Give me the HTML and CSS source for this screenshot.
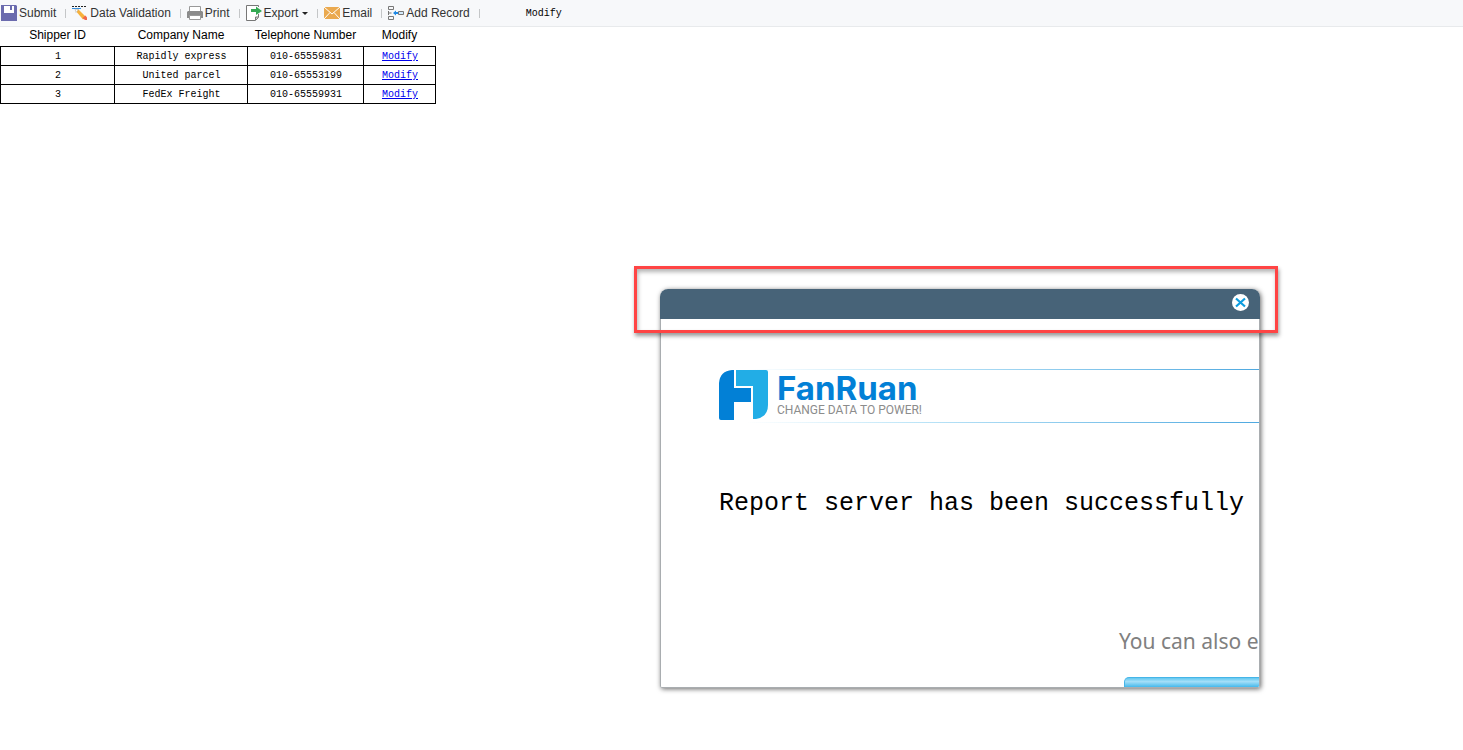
FILE: index.html
```html
<!DOCTYPE html>
<html lang="en">
<head>
    <meta charset="UTF-8">
    <meta name="viewport" content="width=device-width, initial-scale=1.0">
    <title>Shippers</title>
    <link rel="stylesheet" href="styles.css">
</head>
<body>
    <div class="toolbar">
        <button type="button" class="tool">
            <svg width="16" height="16" viewBox="0 0 16 16"><path d="M0 0h15l1 1v15H0z" fill="#6b6bae"/><path d="M3 1h10v7H3z" fill="#fff"/><path d="M9 1h2v4H9z" fill="#6b6bae"/><path d="M2 10h12v4H2z" fill="#6b6bae"/></svg>
            Submit
        </button>
        <button type="button" class="tool">
            <svg width="16" height="16" viewBox="0 0 16 16"><path d="M0 1.500h14" stroke="#222" stroke-dasharray="2 1"/><path d="M0 3.500h9" stroke="#2f8de0"/><path d="M3 5l3-1 8 8-3 2.500z" fill="#f6b13c"/><path d="M3 4l3.500.5-2.500 3z" fill="#fff" stroke="#aaa" stroke-width=".5"/><path d="M10.500 13l3-2.500 1.500 2v2.500h-2z" fill="#f0674c"/></svg>
            Data Validation
        </button>
        <button type="button" class="tool">
            <svg width="16" height="16" viewBox="0 0 16 16"><path d="M2.500 7V1.500h11V7" fill="#fff" stroke="#999"/><path d="M1 6h14l1 1v6H0V7z" fill="#8b8b8b"/><path d="M2.500 10.500h11v4h-11z" fill="#fff" stroke="#999"/></svg>
            Print
        </button>
        <button type="button" class="tool">
            <svg width="16" height="16" viewBox="0 0 16 16"><path d="M12.500 2V.5H.5v15h9l3-3V9" fill="#fff" stroke="#777"/><path d="M9.500 15v-3h3" fill="#ccc" stroke="#777"/><path d="M5 4h5V1.500L16 6l-6 4V7H5z" fill="#34a853"/></svg>
            Export
            <span class="caret"></span>
        </button>
        <button type="button" class="tool">
            <svg width="16" height="16" viewBox="0 0 16 16"><path d="M0 2h16v12H0z" fill="#eaa94f"/><path d="M0 2l8 7 8-7M0 14l6-6.500M16 14l-6-6.500" fill="none" stroke="#fff"/></svg>
            Email
        </button>
        <button type="button" class="tool">
            <svg width="16" height="16" viewBox="0 0 16 16"><path d="M.5 1.500h5v3h-5zM.5 11.500h5v3h-5zM.5 6v4M.5 8h3" fill="none" stroke="#777"/><path d="M10.500 6.500h5v3h-5z" fill="#d3e9fb" stroke="#777"/><path d="M5 8l3-2.500V7h2v2H8v1.500z" fill="#1e88e5"/></svg>
            Add Record
        </button>
        <span class="toolbar-text">Modify</span>
    </div>

    <table class="report">
        <thead>
            <tr>
                <th class="col-id">Shipper ID</th>
                <th class="col-company">Company Name</th>
                <th class="col-phone">Telephone Number</th>
                <th class="col-modify">Modify</th>
            </tr>
        </thead>
        <tbody>
            <tr>
                <td>1</td>
                <td>Rapidly express</td>
                <td>010-65559831</td>
                <td><a href="#">Modify</a></td>
            </tr>
            <tr>
                <td>2</td>
                <td>United parcel</td>
                <td>010-65553199</td>
                <td><a href="#">Modify</a></td>
            </tr>
            <tr>
                <td>3</td>
                <td>FedEx Freight</td>
                <td>010-65559931</td>
                <td><a href="#">Modify</a></td>
            </tr>
        </tbody>
    </table>

    <div class="dialog" role="dialog" aria-label="Modify">
        <div class="dialog-header">
            <button type="button" class="close" aria-label="Close">
                <svg width="17" height="17" viewBox="0 0 17 17"><circle cx="8.500" cy="8.500" r="8.500" fill="#fff"/><path d="M4 4.500l9 8M13 4.500l-9 8" stroke="#0d9de0" stroke-width="2.200"/></svg>
            </button>
        </div>
        <div class="dialog-body">
            <div class="brand">
                <svg width="50" height="50" viewBox="0 0 50 50"><path d="M15 0v18h17v14H15v18H2q-2 0-2-2V13Q1 1 13 0z" fill="#0280d6"/><path d="M17 0h30q2 0 2 2v33q0 12-12 14h-3V16H17z" fill="#22ade6"/></svg>
                <div class="brand-text">
                    <span class="brand-name">FanRuan</span>
                    <span class="brand-slogan">CHANGE DATA TO POWER!</span>
                </div>
            </div>
            <h1 class="message">Report server has been successfully</h1>
            <div class="more">
                <p class="more-text">You can also en</p>
                <button type="button" class="enter" aria-label="Enter"></button>
            </div>
        </div>
    </div>

    <div class="highlight"></div>
</body>
</html>
```

FILE: styles.css
```css
body {
    font-family: "Liberation Sans", Arial, sans-serif;
    font-size: 12px;
    margin: 0;
    background-color: #fff;
    color: #000;
}

.toolbar {
    display: flex;
    align-items: center;
    height: 26px;
    padding-left: 1px;
    background-color: #f7f8fa;
    border-bottom: 1px solid #e8eaec;
}

.tool {
    display: flex;
    align-items: center;
    gap: 2px;
    padding: 0;
    border: none;
    background: none;
    font-family: inherit;
    font-size: 12px;
    line-height: 16px;
    color: #333;
    white-space: nowrap;
    cursor: pointer;
}

.tool + .tool {
    margin-left: 6px;
}

.tool::after {
    content: "";
    width: 1px;
    height: 9px;
    margin-left: 7px;
    background-color: #c4c6c8;
}

.caret {
    margin-left: 2px;
    border: 3px solid transparent;
    border-top: 3px solid #222;
    border-bottom: none;
}

.toolbar-text {
    margin-left: 46px;
    font-family: "Liberation Mono", monospace;
    font-size: 10px;
}

/* report table */
.report {
    width: 436px;
    table-layout: fixed;
    border-collapse: collapse;
    text-align: center;
}

.report th {
    padding: 0 0 2px;
    font-weight: normal;
    line-height: 17px;
}

.report td {
    padding: 2px 0 0 1px;
    border: 1px solid #000;
    font-family: "Liberation Mono", monospace;
    font-size: 10px;
    line-height: 16px;
}

.report a {
    color: #0000ee;
}

.col-id {
    width: 114px;
}

.col-company {
    width: 133px;
}

.col-phone {
    width: 116px;
}

/* dialog */
.dialog {
    position: absolute;
    top: 289px;
    left: 660px;
    width: 600px;
    border-radius: 8px 8px 2px 2px;
    box-shadow: 1px 1px 5px rgba(0, 0, 0, 0.6);
}

.dialog-header {
    display: flex;
    justify-content: flex-end;
    padding: 5px 11px 8px;
    background-color: #476378;
    border-radius: 8px 8px 0 0;
}

.close {
    display: flex;
    padding: 0;
    border: none;
    background: none;
    cursor: pointer;
}

.dialog-body {
    padding: 50px 0 0 58px;
    border: 1px solid #a9adb0;
    border-top: none;
    border-radius: 0 0 2px 2px;
    background-color: #fff;
    overflow: hidden;
    white-space: nowrap;
}

.brand {
    display: flex;
    gap: 8px;
    padding: 1px 0 3px;
    background:
        linear-gradient(to right, #fff 5%, #bfe6f8 35%, #4fa9e0) top / 100% 1px no-repeat,
        linear-gradient(to right, #fff 5%, #bfe6f8 35%, #4fa9e0) bottom / 100% 1px no-repeat;
}

.brand-text {
    display: flex;
    flex-direction: column;
}

.brand-name {
    font-family: Inter, sans-serif;
    font-size: 33px;
    font-weight: 700;
    line-height: 36px;
    color: #0280d6;
}

.brand-slogan {
    font-family: Roboto, sans-serif;
    font-size: 12px;
    line-height: 8px;
    color: #8c8c8c;
}

.message {
    margin: 65px 0 0;
    font-family: "Liberation Mono", monospace;
    font-size: 25px;
    font-weight: normal;
    line-height: 32px;
}

.more {
    margin: 106px 0 0 400px;
}

.more-text {
    margin: 0;
    font-family: "Noto Sans", sans-serif;
    font-size: 21px;
    line-height: 30px;
    color: #808080;
}

.enter {
    display: block;
    width: 160px;
    height: 10px;
    margin: 21px 0 0 5px;
    border: 1px solid #45b5e8;
    border-bottom: none;
    border-radius: 5px 0 0 0;
    background: linear-gradient(#62c8f0, #a5dff8 40%, #45b9ec);
    cursor: pointer;
}

.highlight {
    position: absolute;
    top: 266px;
    left: 634px;
    width: 638px;
    height: 61px;
    border: 3px solid #ff4444;
    box-shadow: 1px 3px 4px rgba(0, 0, 0, 0.4), inset 1px 3px 4px rgba(0, 0, 0, 0.3);
    pointer-events: none;
}
```
